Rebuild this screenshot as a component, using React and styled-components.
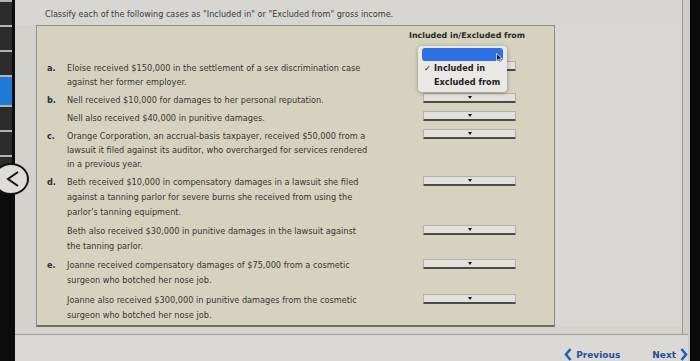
import React from 'react'
import styled, { createGlobalStyle } from 'styled-components'

const GlobalStyle = createGlobalStyle`
  html, body { margin: 0; padding: 0; }
  body {
    width: 700px;
    height: 361px;
    overflow: hidden;
    background: #0d0d0d;
    font-family: "DejaVu Sans", Verdana, sans-serif;
    color: #353533;
  }
`

const cases = [
  {
    letter: 'a.', lh: 14, open: true,
    parts: [['Eloise received $150,000 in the settlement of a sex discrimination case', 'against her former employer.']],
  },
  {
    letter: 'b.', lh: 14,
    parts: [['Nell received $10,000 for damages to her personal reputation.'], ['Nell also received $40,000 in punitive damages.']],
  },
  {
    letter: 'c.', lh: 14,
    parts: [[
      'Orange Corporation, an accrual-basis taxpayer, received $50,000 from a',
      'lawsuit it filed against its auditor, who overcharged for services rendered',
      'in a previous year.',
    ]],
  },
  {
    letter: 'd.', lh: 15,
    parts: [
      [
        'Beth received $10,000 in compensatory damages in a lawsuit she filed',
        'against a tanning parlor for severe burns she received from using the',
        "parlor's tanning equipment.",
      ],
      ['Beth also received $30,000 in punitive damages in the lawsuit against', 'the tanning parlor.'],
    ],
  },
  {
    letter: 'e.', lh: 15.5,
    parts: [
      ['Joanne received compensatory damages of $75,000 from a cosmetic', 'surgeon who botched her nose job.'],
      ['Joanne also received $300,000 in punitive damages from the cosmetic', 'surgeon who botched her nose job.'],
    ],
  },
]

const tabs = [false, false, false, true, false, false, false]

export default function App() {
  return (
    <>
      <GlobalStyle />
      <Screen>
        <Sidebar>
          {tabs.map((blue, i) => <Tab key={i} $blue={blue} />)}
        </Sidebar>
        <BackButton>
          <svg width="16" height="18" viewBox="0 0 16 18">
            <polyline points="13,2 3,9 13,16" fill="none" stroke="#111" strokeWidth="2" />
          </svg>
        </BackButton>
        <Page>
          <Instruction>
            Classify each of the following cases as "Included in" or "Excluded from" gross income.
          </Instruction>
          <Body>
            <Table>
              <HeaderRow>
                <span />
                <Heading>Included in/Excluded from</Heading>
              </HeaderRow>
              <Rows>
                {cases.map((c) => (
                  <Row key={c.letter} $lh={c.lh}>
                    <Letter>{c.letter}</Letter>
                    <Parts>
                      {c.parts.map((lines, j) => (
                        <Para key={j}>
                          <Text>
                            {lines.map((l, k) => <div key={k}>{l}</div>)}
                          </Text>
                          <Select $lh={c.lh}>
                            <Caret />
                            {c.open && j === 0 && (
                              <Menu>
                                <Highlight />
                                <Option><Check>✓</Check>Included in</Option>
                                <Option>Excluded from</Option>
                                <Pointer width="7" height="10" viewBox="0 0 7 10">
                                  <path d="M0.5 0.5 L0.5 8 L2.4 6.2 L3.8 9.3 L5 8.8 L3.6 5.8 L6.2 5.8 Z" fill="#111" stroke="#fff" strokeWidth="0.7" />
                                </Pointer>
                              </Menu>
                            )}
                          </Select>
                        </Para>
                      ))}
                    </Parts>
                  </Row>
                ))}
              </Rows>
            </Table>
            <SidePanel />
          </Body>
          <Footer>
            <NavLink>
              <svg width="8" height="13" viewBox="0 0 8 13">
                <polyline points="6.5,1 2,6.5 6.5,12" fill="none" stroke="#1f5fc0" strokeWidth="2.6" />
              </svg>
              Previous
            </NavLink>
            <NavLink>
              Next
              <svg width="8" height="13" viewBox="0 0 8 13">
                <polyline points="1.5,1 6,6.5 1.5,12" fill="none" stroke="#1f5fc0" strokeWidth="2.6" />
              </svg>
            </NavLink>
          </Footer>
        </Page>
        <EdgeStrip />
        <Bezel />
      </Screen>
    </>
  )
}

const Screen = styled.div`
  position: relative;
  display: flex;
  width: 700px;
  height: 361px;
  overflow: hidden;
`

const Sidebar = styled.div`
  width: 15px;
  flex-shrink: 0;
  background: #0c0c0c;
  display: flex;
  flex-direction: column;
  padding-right: 3px;
  box-sizing: border-box;
`

const Tab = styled.div`
  height: ${p => (p.$blue ? 28 : 23)}px;
  border-top: 2px solid #b4b4b2;
  background: ${p => (p.$blue ? '#1d7bd4' : '#2c2c2c')};
`

const BackButton = styled.div`
  position: absolute;
  left: -7px;
  top: 163px;
  width: 28px;
  height: 28px;
  border-radius: 50%;
  border: 2px solid #111;
  background: #dddcd8;
  display: flex;
  align-items: center;
  justify-content: center;
  padding-left: 4px;
  box-sizing: content-box;
`

const Page = styled.div`
  width: 668px;
  flex-shrink: 0;
  display: flex;
  flex-direction: column;
  background: #d3d2cd;
  border-right: 1px solid #9c9b96;
  box-sizing: border-box;
`

const Instruction = styled.div`
  height: 25px;
  padding: 9px 0 0 30px;
  box-sizing: border-box;
  font-size: 8.1px;
  line-height: 10px;
  white-space: nowrap;
  color: #3a3a38;
  background: #d7d6d3;
`

const Body = styled.div`
  display: flex;
  height: 313px;
  padding-left: 21px;
`

const Table = styled.div`
  width: 519px;
  height: 302px;
  box-sizing: border-box;
  background: #d5d3bf;
  border: 1px solid #8f8e86;
  border-bottom: 2px solid #6e6d66;
  padding: 5px 0 0 10px;
`

const HeaderRow = styled.div`
  display: grid;
  grid-template-columns: 350px 140px;
`

const Heading = styled.div`
  font-weight: bold;
  font-size: 7.9px;
  line-height: 10px;
  text-align: center;
  white-space: nowrap;
  color: #2a2a28;
`

const Rows = styled.div`
  display: flex;
  flex-direction: column;
  gap: 4px;
  margin-top: 20px;
`

const Row = styled.div`
  display: grid;
  grid-template-columns: 20px 1fr;
  font-size: 8.2px;
  line-height: ${p => p.$lh}px;
`

const Letter = styled.div`
  font-weight: bold;
  color: #2f2f2d;
`

const Parts = styled.div`
  display: flex;
  flex-direction: column;
  gap: 4px;
`

const Para = styled.div`
  display: grid;
  grid-template-columns: 346px 93px;
  column-gap: 10px;
  align-items: start;
`

const Text = styled.div`
  white-space: nowrap;
`

const Select = styled.div`
  position: relative;
  height: 7px;
  margin-top: ${p => p.$lh / 2 - 6.5}px;
  background: #e1e0da;
  border: 1px solid #b3b2aa;
  border-bottom: 2px solid #4c4b47;
  border-radius: 1px;
  display: flex;
  align-items: center;
  justify-content: center;
`

const Caret = styled.span`
  width: 0;
  height: 0;
  border-left: 2.5px solid transparent;
  border-right: 2.5px solid transparent;
  border-top: 3px solid #151515;
`

const Menu = styled.div`
  position: absolute;
  left: -6px;
  top: -16px;
  width: 89px;
  height: 46px;
  box-sizing: border-box;
  padding: 2px 4px;
  background: #e9e8e5;
  border-radius: 4px;
  box-shadow: 0 1px 4px rgba(0, 0, 0, 0.35);
  z-index: 2;
`

const Highlight = styled.div`
  height: 13px;
  background: #2e6fe6;
  border-radius: 3px;
`

const Option = styled.div`
  position: relative;
  padding-left: 12px;
  font-weight: bold;
  font-size: 8.2px;
  line-height: 14px;
  white-space: nowrap;
  color: #222;
`

const Check = styled.span`
  position: absolute;
  left: 2px;
  font-weight: normal;
`

const Pointer = styled.svg`
  position: absolute;
  left: 78px;
  top: 7px;
`

const SidePanel = styled.div`
  flex: 1;
  height: 302px;
  background: #d8d7d3;
`

const Footer = styled.div`
  position: relative;
  z-index: 1;
  flex: 1;
  display: flex;
  justify-content: flex-end;
  align-items: flex-start;
  gap: 32px;
  padding: 13px 0 0 0;
  margin-right: -6px;
  border-top: 1px solid #9d9c97;
  background: #dad9d6;
`

const NavLink = styled.div`
  display: flex;
  align-items: center;
  gap: 4px;
  font-size: 9px;
  font-weight: bold;
  color: #25509a;
`

const EdgeStrip = styled.div`
  width: 7px;
  flex-shrink: 0;
  background: #cfceca;
`

const Bezel = styled.div`
  flex: 1;
  background: #0b0b0b;
`
